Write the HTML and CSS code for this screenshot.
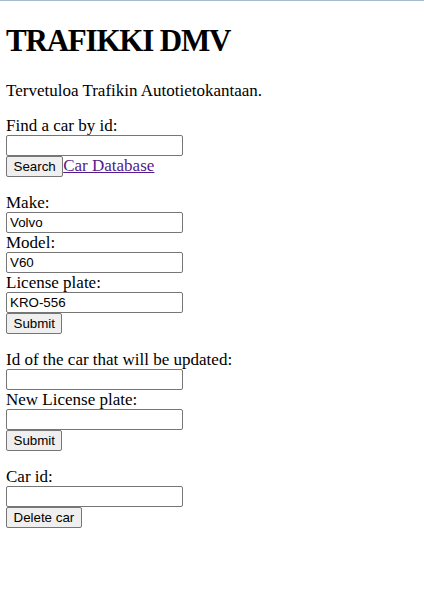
FILE: index.html
```html
<!DOCTYPE html>
<html lang="fi">
<head>
<meta charset="utf-8">
<title>TRAFIKKI DMV</title>
<link rel="stylesheet" href="styles.css">
</head>
<body>
<h1 class="title">TRAFIKKI DMV</h1>
<p class="intro">Tervetuloa Trafikin Autotietokantaan.</p>

<form class="form">
  <label class="label" for="findId">Find a car by id:</label>
  <input class="field" id="findId" type="text">
  <div class="actions">
    <button class="btn" type="button">Search</button><a class="link" href="#">Car Database</a>
  </div>
</form>

<form class="form">
  <label class="label" for="make">Make:</label>
  <input class="field" id="make" type="text" value="Volvo">
  <label class="label" for="model">Model:</label>
  <input class="field" id="model" type="text" value="V60">
  <label class="label" for="plate">License plate:</label>
  <input class="field" id="plate" type="text" value="KRO-556">
  <div class="actions">
    <button class="btn" type="button">Submit</button>
  </div>
</form>

<form class="form">
  <label class="label" for="updId">Id of the car that will be updated:</label>
  <input class="field" id="updId" type="text">
  <label class="label" for="newPlate">New License plate:</label>
  <input class="field" id="newPlate" type="text">
  <div class="actions">
    <button class="btn" type="button">Submit</button>
  </div>
</form>

<form class="form">
  <label class="label" for="delId">Car id:</label>
  <input class="field" id="delId" type="text">
  <div class="actions">
    <button class="btn" type="button">Delete car</button>
  </div>
</form>
</body>
</html>
```

FILE: styles.css
```css
html {
  border-top: 1px solid #a6bbcf;
  background: #ffffff;
}

body {
  margin: 0;
  padding: 0 6px;
  font-family: "Liberation Serif", "Times New Roman", serif;
  font-size: 17px;
  color: #000000;
}

.title {
  margin: 21px 0 21.44px;
  font-size: 31px;
  line-height: 37.5px;
  font-weight: bold;
  letter-spacing: -1.2px;
}

.intro {
  margin: 0 0 16px;
  line-height: 19px;
}

.form {
  margin: 0 0 16px;
}

.label {
  display: block;
  height: 19px;
  line-height: 19px;
}

.field {
  display: block;
  box-sizing: border-box;
  width: 177px;
  height: 21px;
  margin: 0;
  padding: 1px 3px;
  border: 1px solid #767676;
  border-radius: 2px;
  background: #ffffff;
  font-family: "Liberation Sans", Arial, sans-serif;
  font-size: 13.33px;
  color: #000000;
}

.actions {
  display: flex;
  align-items: baseline;
  height: 21px;
}

.btn {
  box-sizing: border-box;
  height: 21px;
  margin: 0;
  padding: 1px 6.5px;
  border: 1px solid #767676;
  border-radius: 2px;
  background: #efefef;
  font-family: "Liberation Sans", Arial, sans-serif;
  font-size: 13.33px;
  color: #000000;
}

.link {
  color: #551a8b;
  text-decoration: underline;
}
```
